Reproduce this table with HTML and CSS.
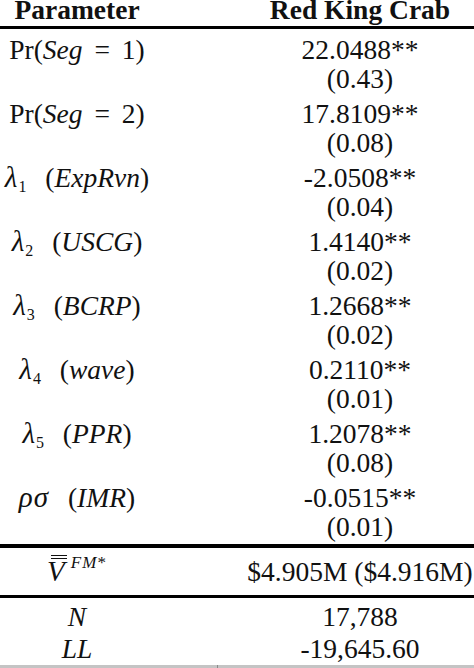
FILE: index.html
```html
<!DOCTYPE html>
<html>
<head>
<meta charset="utf-8">
<link rel="stylesheet" href="styles.css">
</head>
<body>
<div class="table">
  <div class="row head">
    <div class="c1">Parameter</div>
    <div class="c2">Red King Crab</div>
  </div>
  <div class="body">
    <div class="row">
      <div class="c1">Pr(<i>Seg</i> <span class="op">=</span> 1)</div>
      <div class="c2"><div>22.0488**</div><div>(0.43)</div></div>
    </div>
    <div class="row">
      <div class="c1">Pr(<i>Seg</i> <span class="op">=</span> 2)</div>
      <div class="c2"><div>17.8109**</div><div>(0.08)</div></div>
    </div>
    <div class="row">
      <div class="c1"><i class="gk">λ</i><sub>1</sub> (<i>ExpRvn</i>)</div>
      <div class="c2"><div>-2.0508**</div><div>(0.04)</div></div>
    </div>
    <div class="row">
      <div class="c1"><i class="gk">λ</i><sub>2</sub> (<i>USCG</i>)</div>
      <div class="c2"><div>1.4140**</div><div>(0.02)</div></div>
    </div>
    <div class="row">
      <div class="c1"><i class="gk">λ</i><sub>3</sub> (<i>BCRP</i>)</div>
      <div class="c2"><div>1.2668**</div><div>(0.02)</div></div>
    </div>
    <div class="row">
      <div class="c1"><i class="gk">λ</i><sub>4</sub> (<i>wave</i>)</div>
      <div class="c2"><div>0.2110**</div><div>(0.01)</div></div>
    </div>
    <div class="row">
      <div class="c1"><i class="gk">λ</i><sub>5</sub> (<i>PPR</i>)</div>
      <div class="c2"><div>1.2078**</div><div>(0.08)</div></div>
    </div>
    <div class="row">
      <div class="c1"><i class="gk rs">ρσ</i> (<i>IMR</i>)</div>
      <div class="c2"><div>-0.0515**</div><div>(0.01)</div></div>
    </div>
  </div>
  <div class="row vrow">
    <div class="c1"><i class="vbar">V</i><sup><i>FM</i>*</sup></div>
    <div class="c2">$4.905M ($4.916M)</div>
  </div>
  <div class="stats">
    <div class="row">
      <div class="c1"><i>N</i></div>
      <div class="c2">17,788</div>
    </div>
    <div class="row">
      <div class="c1"><i>LL</i></div>
      <div class="c2">-19,645.60</div>
    </div>
  </div>
  <div class="bottom">
    <div class="gl"></div>
    <div class="tick"></div>
    <div class="gl"></div>
  </div>
</div>
</body>
</html>
```
FILE: styles.css
```css
html, body {
  margin: 0;
  padding: 0;
  background: #ffffff;
}
body {
  width: 474px;
  height: 668px;
  overflow: hidden;
  font-family: "Liberation Serif", "Times New Roman", serif;
  font-size: 27.5px;
  color: #111111;
}
.table {
  margin-top: -6px;
}
.row {
  display: grid;
  grid-template-columns: 154px 1fr;
}
.c1 {
  text-align: center;
  white-space: nowrap;
}
.c2 {
  padding-left: 92px;
  text-align: center;
  white-space: nowrap;
}
.head {
  font-weight: bold;
  line-height: 32px;
  border-bottom: 3px solid #000000;
}
.body {
  padding-top: 3px;
  border-bottom: 4px solid #000000;
}
.body .row {
  padding: 3px 0;
  line-height: 29px;
}
.op {
  margin: 0 5px;
}
.gk {
  font-size: 29px;
}
.rs {
  margin-right: 12px;
  letter-spacing: 1px;
}
sub {
  font-size: 16px;
  vertical-align: -5px;
  line-height: 0;
  margin-right: 12px;
  margin-left: 1px;
}
.vrow {
  line-height: 47px;
  border-bottom: 3px solid #000000;
}
.vbar {
  position: relative;
  display: inline-block;
  font-size: 29px;
}
.vbar::before {
  content: "";
  position: absolute;
  left: 4px;
  right: -2px;
  top: 7px;
  height: 2px;
  border-top: 1.5px solid #111111;
  border-bottom: 1.5px solid #111111;
}
sup {
  font-size: 17px;
  vertical-align: 13px;
  line-height: 0;
  margin-left: 6px;
  letter-spacing: 1px;
}
.stats {
  padding-top: 3px;
}
.stats .row {
  line-height: 32px;
}
.bottom {
  display: grid;
  grid-template-columns: 217px 1px 1fr;
  height: 3px;
}
.gl {
  background: #c4c4c4;
}
.tick {
  background: #8a8a8a;
}
```
